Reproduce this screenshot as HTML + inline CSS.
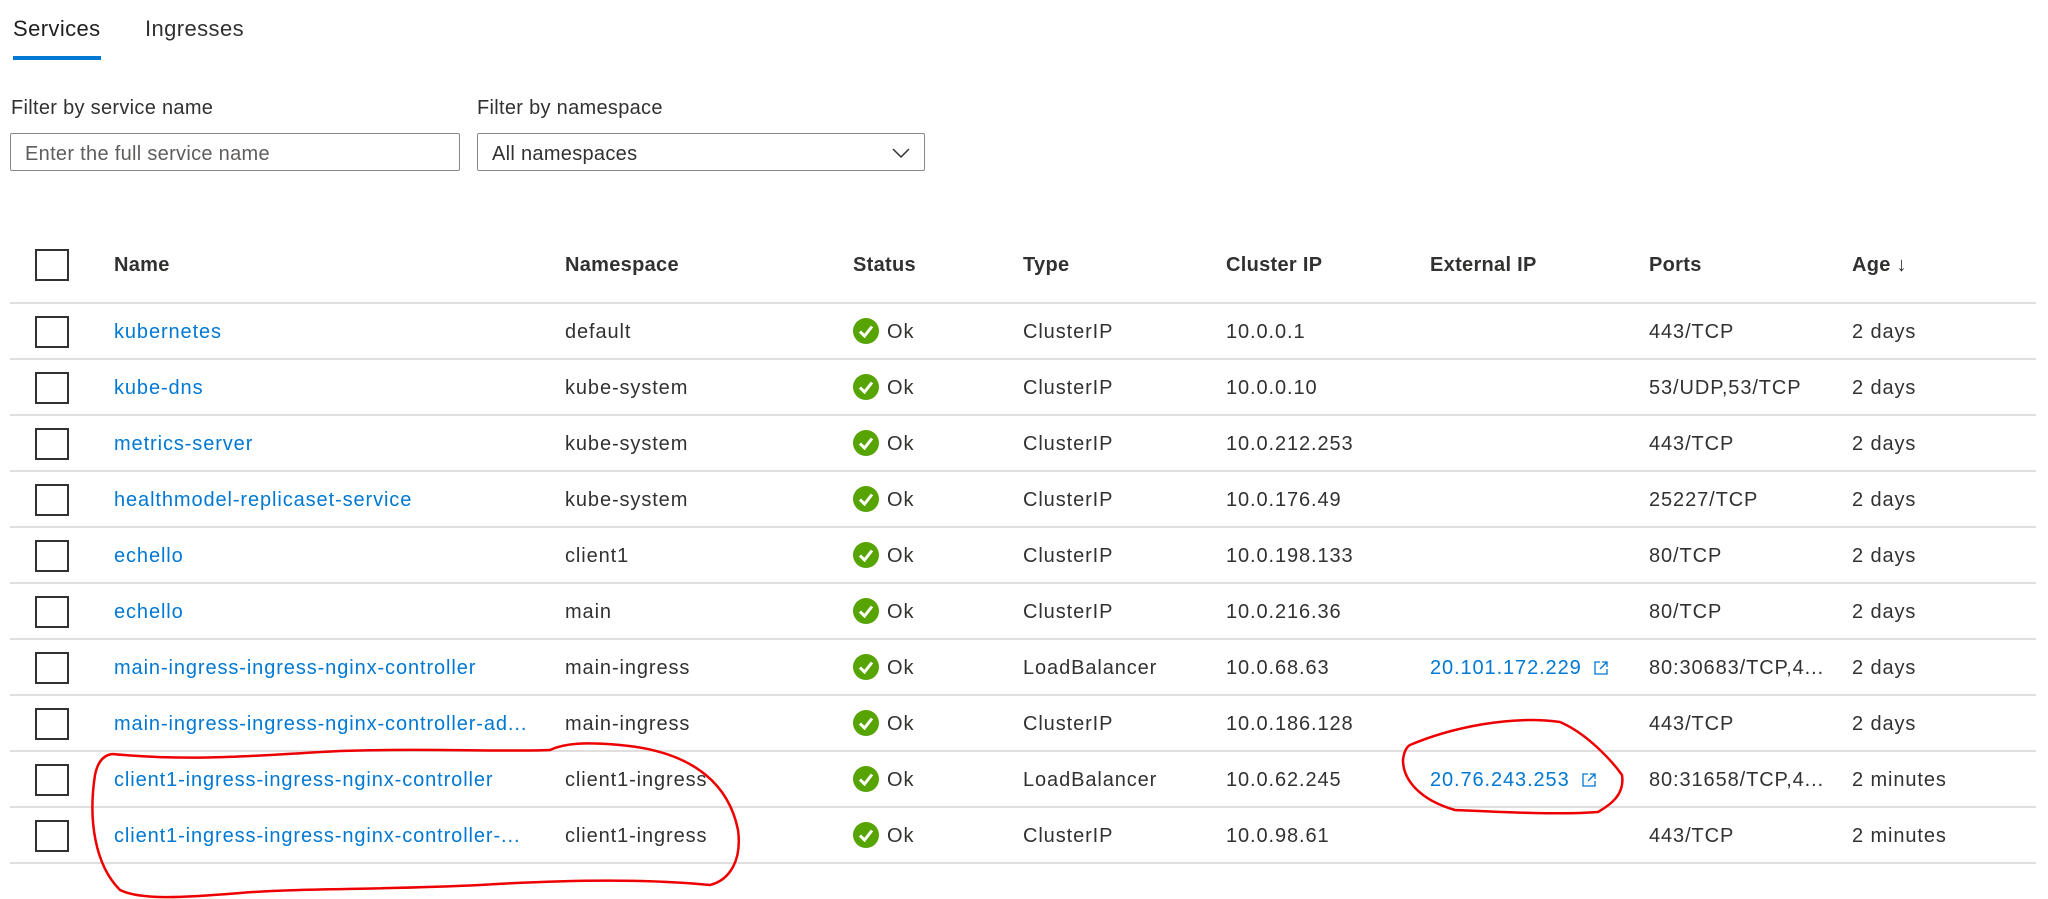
<!DOCTYPE html>
<html><head><meta charset="utf-8"><style>
body{margin:0;width:2048px;height:899px;background:#fff;font-family:"Liberation Sans",sans-serif;color:#323130;position:relative;overflow:hidden}
.a{position:absolute;white-space:nowrap}
.tab{font-size:22px;top:16px;letter-spacing:0.4px}
.lbl{font-size:20px;top:97px;letter-spacing:0.3px}
.inp{position:absolute;top:133px;height:38px;border:1px solid #8a8886;border-radius:2px;box-sizing:border-box;font-size:20px;line-height:40px;padding-left:14px;letter-spacing:0.3px}
.hl{position:absolute;left:10px;width:2026px;height:2px;background:#e1dfdd}
.cb{position:absolute;left:35px;width:34px;height:32px;border:2px solid #323130;box-sizing:border-box}
.t{position:absolute;font-size:20px;white-space:nowrap;letter-spacing:0.9px}
.h{font-weight:bold;color:#323130;letter-spacing:0.3px}
.lk{color:#0078d4}
.ok{position:absolute;width:26px;height:26px;border-radius:50%;background:#57a300}
</style></head><body>
<div class="a tab" style="left:13px;color:#201f1e">Services</div>
<div class="a tab" style="left:145px">Ingresses</div>
<div style="position:absolute;left:13px;top:56px;width:88px;height:4px;background:#0078d4"></div>
<div class="a lbl" style="left:11px">Filter by service name</div>
<div class="a lbl" style="left:477px">Filter by namespace</div>
<div class="inp" style="left:10px;width:450px;color:#605e5c">Enter the full service name</div>
<div class="inp" style="left:477px;width:448px">All namespaces
<svg style="position:absolute;right:14px;top:14px" width="18" height="11" viewBox="0 0 18 11"><path d="M1 1 L9 9 L17 1" fill="none" stroke="#323130" stroke-width="1.5"/></svg></div>
<div id="tbl"></div>
<script>
var cols=[114,565,853,1023,1226,1430,1649,1852];
var s='';
s+='<div class="cb" style="top:249px"></div>';
var hd=['Name','Namespace','Status','Type','Cluster IP','External IP','Ports','Age \u2193'];
hd.forEach(function(x,i){s+='<div class="t h" style="left:'+cols[i]+'px;top:254px">'+x+'</div>';});
s+='<div class="hl" style="top:302px"></div>';
var rows=[
['kubernetes','default','ClusterIP','10.0.0.1','','443/TCP','2 days'],
['kube-dns','kube-system','ClusterIP','10.0.0.10','','53/UDP,53/TCP','2 days'],
['metrics-server','kube-system','ClusterIP','10.0.212.253','','443/TCP','2 days'],
['healthmodel-replicaset-service','kube-system','ClusterIP','10.0.176.49','','25227/TCP','2 days'],
['echello','client1','ClusterIP','10.0.198.133','','80/TCP','2 days'],
['echello','main','ClusterIP','10.0.216.36','','80/TCP','2 days'],
['main-ingress-ingress-nginx-controller','main-ingress','LoadBalancer','10.0.68.63','20.101.172.229','80:30683/TCP,4...','2 days'],
['main-ingress-ingress-nginx-controller-ad...','main-ingress','ClusterIP','10.0.186.128','','443/TCP','2 days'],
['client1-ingress-ingress-nginx-controller','client1-ingress','LoadBalancer','10.0.62.245','20.76.243.253','80:31658/TCP,4...','2 minutes'],
['client1-ingress-ingress-nginx-controller-...','client1-ingress','ClusterIP','10.0.98.61','','443/TCP','2 minutes']];
var ext='<svg width="14" height="14" viewBox="0 0 14 14" style="margin-left:12px;vertical-align:-1px"><path d="M6 1H1V13H13V8M8 1H13V6M13 1L6 8" fill="none" stroke="#0078d4" stroke-width="1.3"/></svg>';
rows.forEach(function(r,k){var y=304+56*k,c=y+28;
s+='<div class="cb" style="top:'+(c-16)+'px"></div>';
s+='<div class="t lk" style="left:114px;top:'+(c-11)+'px">'+r[0]+'</div>';
s+='<div class="t" style="left:565px;top:'+(c-11)+'px">'+r[1]+'</div>';
s+='<div class="ok" style="left:853px;top:'+(c-14)+'px"><svg width="26" height="26" viewBox="0 0 26 26"><path d="M7 13.5L11.5 18L19 8.5" fill="none" stroke="#fff" stroke-width="3"/></svg></div>';
s+='<div class="t" style="left:887px;top:'+(c-11)+'px">Ok</div>';
s+='<div class="t" style="left:1023px;top:'+(c-11)+'px">'+r[2]+'</div>';
s+='<div class="t" style="left:1226px;top:'+(c-11)+'px">'+r[3]+'</div>';
if(r[4])s+='<div class="t lk" style="left:1430px;top:'+(c-11)+'px">'+r[4]+ext+'</div>';
s+='<div class="t" style="left:1649px;top:'+(c-11)+'px">'+r[5]+'</div>';
s+='<div class="t" style="left:1852px;top:'+(c-11)+'px">'+r[6]+'</div>';
s+='<div class="hl" style="top:'+(y+54)+'px"></div>';});
document.getElementById('tbl').innerHTML=s;
</script>
<svg style="position:absolute;left:0;top:0" width="2048" height="899">
<path d="M112 754 C200 762 260 755 340 751 C420 748 500 752 550 750 C565 743 585 742 620 745 C700 752 730 790 738 830 C742 860 730 880 710 885 C640 878 560 880 480 885 C380 890 300 888 240 893 C180 898 140 900 120 890 C95 865 88 820 95 775 C98 760 105 755 112 754" fill="none" stroke="#e00" stroke-width="2.5"/>
<path d="M1410 745 C1450 728 1510 715 1560 722 C1590 735 1615 765 1622 775 C1625 795 1610 805 1598 812 C1560 815 1500 812 1455 810 C1420 800 1403 780 1403 760 C1404 750 1408 746 1410 745" fill="none" stroke="#e00" stroke-width="2.5"/>
</svg>
</body></html>
